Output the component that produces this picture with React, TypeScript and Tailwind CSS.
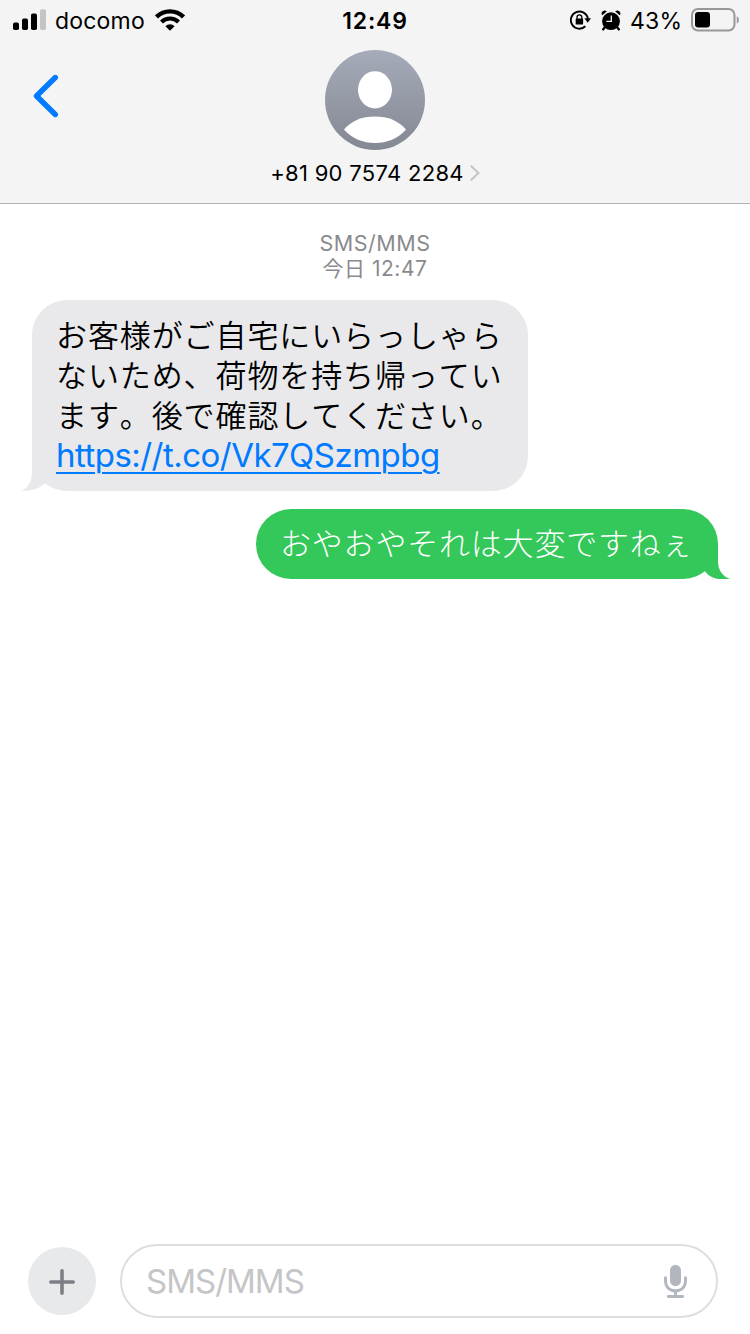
import React from "react";

const latin = "font-[Inter,'Noto_Sans_CJK_JP',sans-serif]";

function SignalIcon() {
  return (
    <svg width="33" height="22" viewBox="0 0 33 22" className="block shrink-0">
      <rect x="0" y="13.5" width="6" height="7.5" rx="1.8" />
      <rect x="9" y="9.5" width="6" height="11.5" rx="1.8" />
      <rect x="18" y="4.5" width="6" height="16.5" rx="1.8" />
      <rect x="27" y="0.3" width="6" height="20.7" rx="1.8" fill="#c4c4c4" />
    </svg>
  );
}

function WifiIcon() {
  return (
    <svg width="30" height="22" viewBox="0 0 30 22" className="block shrink-0" fill="none" stroke="#000">
      <path d="M1.5 7.9A19.2 19.2 0 0 1 28.5 7.9" strokeWidth="4.4" />
      <path d="M6.5 13A12.1 12.1 0 0 1 23.5 13" strokeWidth="4.2" />
      <path d="M10.4 17.2A6.5 6.5 0 0 1 19.6 17.2L15 21.7Z" fill="#000" stroke="none" />
    </svg>
  );
}

function RotationLockIcon() {
  return (
    <svg width="21" height="20" viewBox="0 0 21 20" className="block shrink-0">
      <path d="M15.4 16.3A8.6 8.6 0 1 1 17.9 8.6" fill="none" stroke="#000" strokeWidth="1.9" />
      <path d="M14.4 8.3h6.6l-3.3 4.4z" />
      <rect x="5.7" y="8.6" width="7.4" height="6" rx="0.9" />
      <path d="M7 9V7.2a2.4 2.4 0 0 1 4.8 0V9" fill="none" stroke="#000" strokeWidth="1.3" />
    </svg>
  );
}

function AlarmIcon() {
  return (
    <svg width="20" height="21" viewBox="0 0 20 21" className="block shrink-0">
      <circle cx="10" cy="11.2" r="8.9" />
      <path d="M1.2 5.2A3 3 0 0 1 5.8 1.4ZM18.8 5.2A3 3 0 0 0 14.2 1.4Z" />
      <path d="M3.8 17.2L2.2 19.4M16.2 17.2L17.8 19.4" stroke="#000" strokeWidth="2.4" strokeLinecap="round" />
      <path d="M10.3 5.6V11.4H5.4" fill="none" stroke="#f4f4f4" strokeWidth="1.3" />
    </svg>
  );
}

function BatteryIcon() {
  return (
    <svg width="49" height="24" viewBox="0 0 49 24" className="block shrink-0">
      <rect x="1" y="1" width="42.5" height="21.5" rx="6" fill="none" stroke="#989898" strokeWidth="2" />
      <rect x="4" y="4" width="15" height="15.5" rx="3.2" />
      <path d="M45.8 8.2C48.6 9 48.6 14.6 45.8 15.4Z" fill="#989898" />
    </svg>
  );
}

function StatusBar() {
  return (
    <div className="grid h-10 grid-cols-[1fr_auto_1fr] items-center text-[23px] leading-none">
      <div className="flex items-center pl-[13px]">
        <SignalIcon />
        <span className="ml-[9px] w-[90px] whitespace-nowrap pt-0.5 tracking-[0.2px]">docomo</span>
        <span className="ml-[10px]"><WifiIcon /></span>
      </div>
      <span className="pt-0.5 text-[23px] font-semibold tracking-[0.8px]">12:49</span>
      <div className="flex items-center justify-end pr-[10px]">
        <RotationLockIcon />
        <span className="ml-[10px]"><AlarmIcon /></span>
        <span className="ml-[9px] w-[52px] whitespace-nowrap pt-0.5 tracking-[0.2px]">43%</span>
        <span className="ml-[9px]"><BatteryIcon /></span>
      </div>
    </div>
  );
}

function Avatar() {
  return (
    <svg width="100" height="100" viewBox="0 0 100 100" className="block">
      <defs>
        <linearGradient id="avatar" x1="0" y1="0" x2="0" y2="1">
          <stop offset="0" stopColor="#a5abb9" />
          <stop offset="1" stopColor="#848892" />
        </linearGradient>
      </defs>
      <circle cx="50" cy="50" r="50" fill="url(#avatar)" />
      <ellipse cx="50" cy="39.8" rx="17" ry="18.6" fill="#fff" />
      <path d="M19 79.5C26 71 37 66.5 50 66.5S74 71 81 79.5C73 88.5 62 93 50 93S27 88.5 19 79.5Z" fill="#fff" />
    </svg>
  );
}

function Header() {
  return (
    <header className="h-[204px] shrink-0 border-b border-[#b2b2b4] bg-[#f4f4f4]">
      <StatusBar />
      <div className="grid grid-cols-[1fr_auto_1fr] pt-[10px]">
        <svg width="28" height="44" viewBox="0 0 28 44" className="ml-8 mt-6 block" fill="none" stroke="#007aff" strokeWidth="5.4" strokeLinecap="round" strokeLinejoin="round">
          <path d="M23.3 3.5L4.5 22L23.3 40.5" />
        </svg>
        <div className="flex w-[220px] flex-col items-center">
          <Avatar />
          <div className="mt-[10px] flex items-center gap-[6px]">
            <span className="whitespace-nowrap text-[22px] leading-[26px] tracking-[0.3px]">+81 90 7574 2284</span>
            <svg width="10" height="16" viewBox="0 0 10 16" fill="none" stroke="#c3c3c6" strokeWidth="1.9" strokeLinecap="round">
              <path d="M1.3 1.2L8.5 8L1.3 14.8" />
            </svg>
          </div>
        </div>
        <div />
      </div>
    </header>
  );
}

function Conversation() {
  return (
    <main className="flex flex-1 flex-col px-8">
      <div className="mt-[26px] flex flex-col items-center text-[#8a8a8e]">
        <span className="text-[21.5px] font-normal leading-[26px] tracking-[0.5px]">SMS/MMS</span>
        <span className="text-[21px] leading-[26px] tracking-[0.5px]">今日 12:47</span>
      </div>
      <div className="relative mt-[18px] h-[191px] w-[496px] rounded-[35px] bg-[#e9e9eb] pl-6 pt-4">
        <svg width="34" height="36" viewBox="0 5 34 36" className="absolute -left-[10px] bottom-0" fill="#e9e9eb">
          <path d="M10 0V22C10 31 7 37 0 40.5C9 41.5 17 38.5 23 33.5L34 20V0Z" />
        </svg>
        <p className="relative whitespace-nowrap text-[31px] font-[350] leading-10 tracking-[0.9px] text-black [font-kerning:none]">
          お客様がご自宅にいらっしゃら<br />
          ないため、荷物を持ち帰ってい<br />
          ます。後で確認してください。
        </p>
        <a className="relative -mt-px block w-fit whitespace-nowrap text-[33px] leading-10 tracking-[-0.53px] text-[#007aff] underline decoration-2 underline-offset-[5px]">https://t.co/Vk7QSzmpbg</a>
      </div>
      <div className="relative mt-[18px] h-[70px] w-[462px] self-end rounded-[35px] bg-[#34c759] pl-6 pt-[15px]">
        <svg width="34" height="35" viewBox="0 5 34 35" className="absolute -right-[12px] bottom-0" fill="#34c759">
          <path d="M21 0L22 6V22C22 31 26 37 34 40C25 42 14 39 9.5 33L0 20V0Z" />
        </svg>
        <p className="relative whitespace-nowrap text-[31px] font-light leading-10 tracking-[0.8px] text-white [font-kerning:none]">おやおやそれは大変ですねぇ</p>
      </div>
    </main>
  );
}

function Composer() {
  return (
    <footer className="flex items-center gap-6 pb-4 pl-7 pr-8">
      <button className="flex size-[68px] shrink-0 items-center justify-center rounded-full bg-[#e8e9eb]">
        <svg width="26" height="26" viewBox="0 0 26 26" stroke="#7e7f86" strokeWidth="3.6" strokeLinecap="round" className="mt-0.5">
          <path d="M13 1.8V24.2M1.8 13H24.2" />
        </svg>
      </button>
      <div className="flex h-[74px] flex-1 items-center justify-between rounded-full border-2 border-[#dedee0] pl-6 pr-[28px]">
        <span className="text-[33px] leading-none tracking-[-1px] text-[#c5c5c7]">SMS/MMS</span>
        <svg width="24" height="35" viewBox="0 0 24 35" fill="none" stroke="#b2b7bf" strokeWidth="2.9" strokeLinecap="round">
          <rect x="6" y="0.8" width="11" height="21.4" rx="5.5" fill="#b2b7bf" stroke="none" />
          <path d="M1.5 13.8V16.8C1.5 23 5.6 26.8 11.5 26.8S21.5 23 21.5 16.8V13.8M11.5 27V32.4M4.3 32.5H18.7" />
        </svg>
      </div>
    </footer>
  );
}

export default function App() {
  return (
    <div className={`${latin} flex h-[1334px] w-[750px] flex-col overflow-hidden bg-white text-black`}>
      <Header />
      <Conversation />
      <Composer />
    </div>
  );
}
